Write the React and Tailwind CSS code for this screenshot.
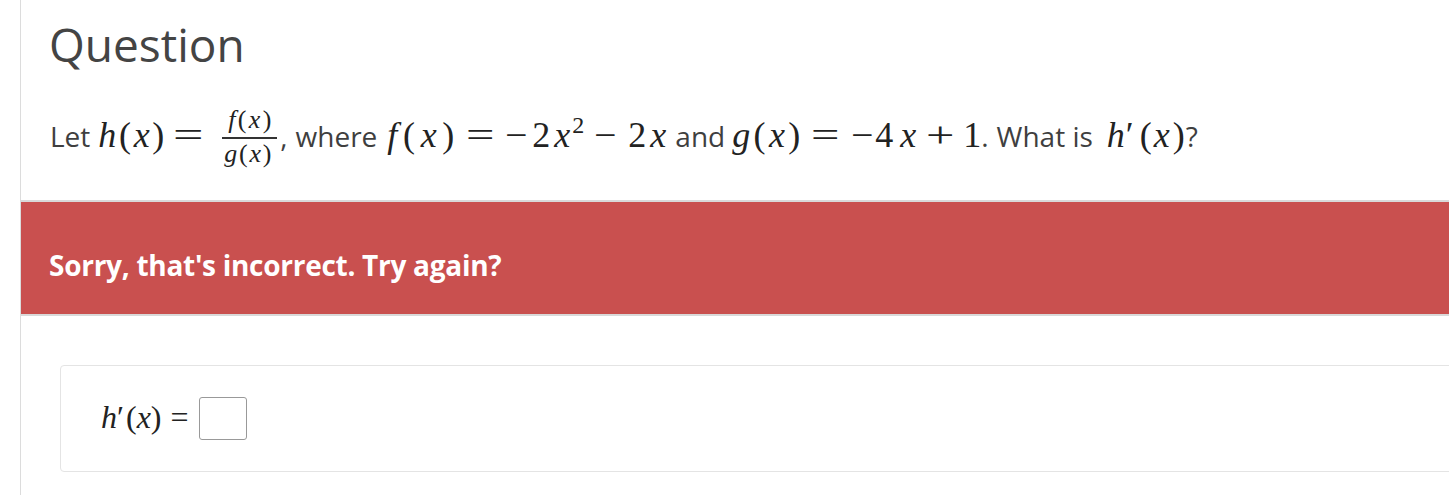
import React from "react";

const MATH = "font-['Liberation_Serif',serif] text-[#222]";

function I({ children }) {
  return <span className="italic">{children}</span>;
}
function R({ children }) {
  return <span>{children}</span>;
}
function M({ cls, children }) {
  return (
    <span className={"inline-flex justify-between items-baseline text-[36px] leading-[40px] " + MATH + " " + cls}>
      {children}
    </span>
  );
}
function Op({ cls, sx, children }) {
  return (
    <span className={"inline-flex justify-center items-baseline text-[36px] leading-[40px] " + MATH + " " + cls}>
      <span className={"inline-block " + sx}>{children}</span>
    </span>
  );
}

export default function App() {
  return (
    <div className="w-full h-[495px] overflow-hidden flex bg-white font-['Open_Sans',sans-serif]">
      <div className="w-[21px] shrink-0 border-r border-[#dcdcdc]" />
      <div className="flex-1 flex flex-col overflow-hidden">
        <h1 className="mt-[16px] pl-[28px] text-[46px] leading-[56px] text-[#444] font-normal">Question</h1>

        <div className="mt-[32px] h-[64px] leading-[64px] pl-[29px] text-[28px] text-[#3f3f3f] whitespace-nowrap">
          <span>Let</span>
          <M cls="ml-[8px] w-[66px]"><I>h</I><R>(</R><I>x</I><R>)</R></M>
          <Op cls="ml-[9px] w-[29px]" sx="scale-x-150">=</Op>
          <span className={"inline-flex flex-col align-[19px] ml-[20px] w-[55px] " + MATH}>
            <span className="flex justify-between items-baseline pl-[6px] pr-[6px] text-[26px] leading-[26px] pb-[4px]">
              <I>f</I><R>(</R><I>x</I><R>)</R>
            </span>
            <span className="h-[1.5px] bg-[#333]" />
            <span className="flex justify-between items-baseline pl-[2px] pr-[6px] text-[26px] leading-[26px] pt-[2px]">
              <I>g</I><R>(</R><I>x</I><R>)</R>
            </span>
          </span>
          <span className="ml-[3px]">,</span>
          <span className="ml-[8px]">where</span>
          <M cls="ml-[10px] w-[67px]"><I>f</I><R>(</R><I>x</I><R>)</R></M>
          <Op cls="ml-[12px] w-[27px]" sx="scale-x-140">=</Op>
          <Op cls="ml-[13px] w-[20px]" sx="scale-x-110">−</Op>
          <M cls="ml-[6px] w-[38px]"><R>2</R><I>x</I></M>
          <span className={"inline-block align-[14px] ml-[2px] text-[24px] leading-none " + MATH}>2</span>
          <Op cls="ml-[11px] w-[20px]" sx="scale-x-110">−</Op>
          <M cls="ml-[13px] w-[38px]"><R>2</R><I>x</I></M>
          <span className="ml-[9px]">and</span>
          <M cls="ml-[7px] w-[68px]"><I>g</I><R>(</R><I>x</I><R>)</R></M>
          <Op cls="ml-[11px] w-[28px]" sx="scale-x-140">=</Op>
          <Op cls="ml-[13px] w-[19px]" sx="scale-x-110">−</Op>
          <M cls="ml-[4px] w-[41px]"><R>4</R><I>x</I></M>
          <Op cls="ml-[9px] w-[29px]" sx="scale-x-140">+</Op>
          <M cls="ml-[9px] w-[18px]"><R>1</R></M>
          <span>.</span>
          <span className="ml-[8px]">What is</span>
          <span className={"inline-flex items-baseline ml-[14px] text-[36px] leading-[40px] " + MATH}>
            <I>h</I>
            <span className="ml-[1px]">′</span>
            <span className="ml-[6px]">(</span>
            <span className="italic ml-[2px]">x</span>
            <span className="ml-[3px]">)</span>
          </span>
          <span className="ml-[1px]">?</span>
        </div>

        <div className="mt-[32px] h-[116px] shrink-0 border-y-2 border-[#d9d9d9] bg-[#c9504f] pl-[28px] pt-[44px]">
          <p className="text-[28px] leading-[38px] font-bold text-white tracking-[-0.01em]">
            Sorry, that's incorrect. Try again?
          </p>
        </div>

        <div className="mt-[49px] ml-[39px] mr-[-10px] h-[107px] shrink-0 border border-[#e4e4e4] rounded-[4px] flex items-center pl-[40px]">
          <span className={"flex items-baseline text-[32px] leading-[32px] pb-[3px] " + MATH}>
            <I>h</I>
            <span>′</span>
            <span className="ml-[2px]">(</span>
            <I>x</I>
            <span>)</span>
            <span className="ml-[9px]">=</span>
          </span>
          <span className="ml-[10px] w-[48px] h-[43px] border border-[#999] rounded-[3px] bg-white" />
        </div>
      </div>
    </div>
  );
}
